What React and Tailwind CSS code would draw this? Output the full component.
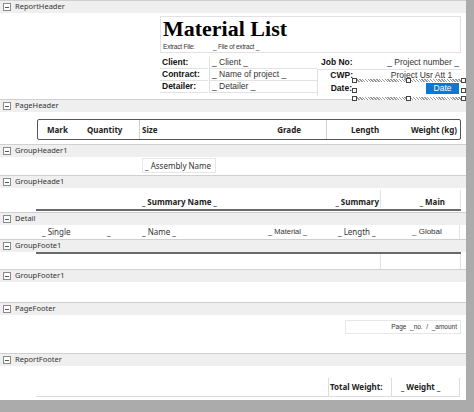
import React from "react";

function Band({ label }) {
    return (
        <div className="flex h-[13px] items-center gap-[4px] border-t border-[#d0d0d0] bg-[#efefef] pl-[3px]">
            <span className="flex h-[8px] w-[8px] items-center justify-center border border-[#8a8a8a] bg-white">
                <span className="h-px w-[4px] bg-[#555]" />
            </span>
            <span className="font-['Noto_Sans'] text-[7.5px] leading-none text-[#333]">{label}</span>
        </div>
    );
}

function Handle({ className }) {
    return <span className={`absolute h-[5px] w-[5px] border border-[#444] bg-white ${className}`} />;
}

function InfoRow({ label, value }) {
    return (
        <div className="flex h-[12px] gap-[1px] font-['Liberation_Sans'] text-[8.5px] leading-[11px]">
            <div className="w-[48px] border-b border-[#e2e2e2] pl-[2px] font-bold text-[#111]">{label}</div>
            <div className="w-[108px] border-b border-l border-[#e2e2e2] pl-[2px] text-[#333]">{value}</div>
        </div>
    );
}

function ReportHeader() {
    return (
        <div className="h-[86px] pl-[160px] pt-[3px]">
            <div className="h-[37px] w-[301px] border border-[#e2e2e2] pl-[2px] pt-[1px]">
                <div className="font-['Liberation_Serif'] text-[22px] font-bold leading-[22px] text-black">Material List</div>
                <div className="mt-[2px] flex font-['Liberation_Sans'] text-[6.5px] leading-[10px] tracking-[-0.2px] text-[#333]">
                    <span className="w-[50px]">Extract File:</span>
                    <span>_ File of extract _</span>
                </div>
            </div>
            <div className="mt-[4px] flex">
                <div className="flex w-[157px] flex-col">
                    <InfoRow label="Client:" value="_ Client _" />
                    <InfoRow label="Contract:" value="_ Name of project _" />
                    <InfoRow label="Detailer:" value="_ Detailer _" />
                </div>
                <div className="flex w-[145px] flex-col font-['Liberation_Sans'] text-[8.5px] leading-[11px]">
                    <div className="flex h-[12px]">
                        <span className="pl-[4px] font-bold text-[#111]">Job No:</span>
                        <span className="ml-auto pr-[3px] text-[#333]">_ Project number _</span>
                    </div>
                    <div className="relative h-[27px] border-l border-t border-[#e2e2e2]">
                        <div className="flex h-[12px]">
                            <span className="w-[35px] text-right font-bold text-[#111]">CWP:</span>
                            <span className="ml-auto pr-[5px] text-[#333]">_ Project Usr Att 1_</span>
                        </div>
                        <div className="flex h-[12px] items-center">
                            <span className="w-[34px] text-right font-bold text-[#111]">Date:</span>
                            <span className="ml-auto mr-[3px] flex h-[11px] w-[33px] items-center justify-center bg-[#0a78d7] text-white">
                                Date
                            </span>
                        </div>
                        <span className="absolute left-[38px] top-[9px] h-[3px] w-[106px] bg-[repeating-linear-gradient(45deg,#9a9a9a_0,#9a9a9a_1px,#ffffff_1px,#ffffff_2px)]" />
                        <span className="absolute left-[38px] top-[27px] h-[3px] w-[106px] bg-[repeating-linear-gradient(45deg,#9a9a9a_0,#9a9a9a_1px,#ffffff_1px,#ffffff_2px)]" />
                        <Handle className="left-[34px] top-[8px]" />
                        <Handle className="left-[88px] top-[8px]" />
                        <Handle className="left-[143px] top-[8px]" />
                        <Handle className="left-[34px] top-[18px]" />
                        <Handle className="left-[143px] top-[18px]" />
                        <Handle className="left-[34px] top-[26px]" />
                        <Handle className="left-[88px] top-[26px]" />
                        <Handle className="left-[143px] top-[26px]" />
                    </div>
                </div>
            </div>
        </div>
    );
}

function PageHeader() {
    return (
        <div className="h-[32px] pl-[37px] pt-[7px]">
            <div className="flex h-[21px] w-[424px] items-center rounded-[2px] border border-[#555] font-['Noto_Sans'] text-[8px] font-bold text-[#222]">
                <div className="flex h-full w-[102px] items-center border-r border-[#cfcfcf]">
                    <span className="w-[49px] pl-[9px]">Mark</span>
                    <span>Quantity</span>
                </div>
                <div className="flex h-full w-[187px] items-center justify-between border-r border-[#cfcfcf] pl-[2px] pr-[25px]">
                    <span>Size</span>
                    <span>Grade</span>
                </div>
                <div className="flex h-full flex-1 items-center justify-between pl-[24px] pr-[3px]">
                    <span>Length</span>
                    <span>Weight (kg)</span>
                </div>
            </div>
        </div>
    );
}

function GroupHeader() {
    return (
        <div className="h-[18px] pl-[142px] pt-[1px]">
            <div className="h-[15px] w-[74px] border border-[#e6e6e6] pl-[2px] font-['Noto_Sans'] text-[8px] leading-[13px] text-[#333]">
                _ Assembly Name
            </div>
        </div>
    );
}

function SummaryHeader() {
    return (
        <div className="h-[24px] pl-[36px] pt-[2px]">
            <div className="flex h-[19px] w-[425px] items-end pb-[1px] font-['Noto_Sans'] text-[8px] font-bold leading-[12px] text-[#222]">
                <div className="flex h-full w-[345px] items-end justify-between border-r border-[#e2e2e2] pl-[106px] pr-[1px]">
                    <span>_ Summary Name _</span>
                    <span>_ Summary</span>
                </div>
                <div className="flex h-full flex-1 items-end justify-end border-r border-[#e2e2e2] pr-[15px]">_ Main</div>
            </div>
            <div className="h-[2px] w-[425px] bg-[#6a6a6a]" />
        </div>
    );
}

function DetailRow() {
    return (
        <div className="flex h-[14px] items-center pl-[40px] font-['Noto_Sans'] text-[8px] leading-[12px] text-[#333]">
            <span className="w-[65px] pl-[2px]">_ Single</span>
            <span className="w-[35px] pl-[2px]">_</span>
            <span className="w-[125px] pl-[2px]">_ Name _</span>
            <span className="w-[70px] pl-[3px] font-['Liberation_Sans'] text-[7.5px]">_ Material _</span>
            <span className="w-[70px] pl-[3px]">_ Length _</span>
            <span className="h-full w-[55px] border-r border-[#e2e2e2] pl-[7px] font-['Liberation_Sans'] leading-[14px]">_ Global</span>
        </div>
    );
}

function GroupFooter() {
    return (
        <div className="h-[17px] pl-[36px]">
            <div className="h-[2px] w-[425px] bg-[#6a6a6a]" />
            <div className="flex h-[15px] w-[425px]">
                <div className="w-[345px] border-r border-[#e2e2e2]" />
                <div className="flex-1 border-r border-[#e2e2e2]" />
            </div>
        </div>
    );
}

function PageFooter() {
    return (
        <div className="h-[38px] pl-[345px] pt-[5px]">
            <div className="flex h-[14px] w-[116px] items-center justify-end whitespace-pre border border-[#e6e6e6] pr-[3px] font-['Liberation_Sans'] text-[6.5px] text-[#333]">
                Page  _no.  /  _amount
            </div>
        </div>
    );
}

function ReportFooter() {
    return (
        <div className="h-[34px] pl-[36px] pt-[12px]">
            <div className="flex h-[19px] w-[424px] border-b border-[#dcdcdc] font-['Noto_Sans'] text-[8px] font-bold text-[#222]">
                <div className="w-[292px]" />
                <div className="flex w-[63px] items-center border-l border-[#dcdcdc] pl-[1px]">Total Weight:</div>
                <div className="flex flex-1 items-center border-l border-r border-[#dcdcdc] pl-[9px]">_ Weight _</div>
            </div>
        </div>
    );
}

export default function App() {
    return (
        <div className="h-[412px] w-[474px] overflow-hidden bg-[#ababab]">
            <div className="h-[400px] w-[466px] bg-white">
                <Band label="ReportHeader" />
                <ReportHeader />
                <Band label="PageHeader" />
                <PageHeader />
                <Band label="GroupHeader1" />
                <GroupHeader />
                <Band label="GroupHeade1" />
                <SummaryHeader />
                <Band label="Detail" />
                <DetailRow />
                <Band label="GroupFoote1" />
                <GroupFooter />
                <Band label="GroupFooter1" />
                <div className="h-[20px]" />
                <Band label="PageFooter" />
                <PageFooter />
                <Band label="ReportFooter" />
                <ReportFooter />
            </div>
        </div>
    );
}
